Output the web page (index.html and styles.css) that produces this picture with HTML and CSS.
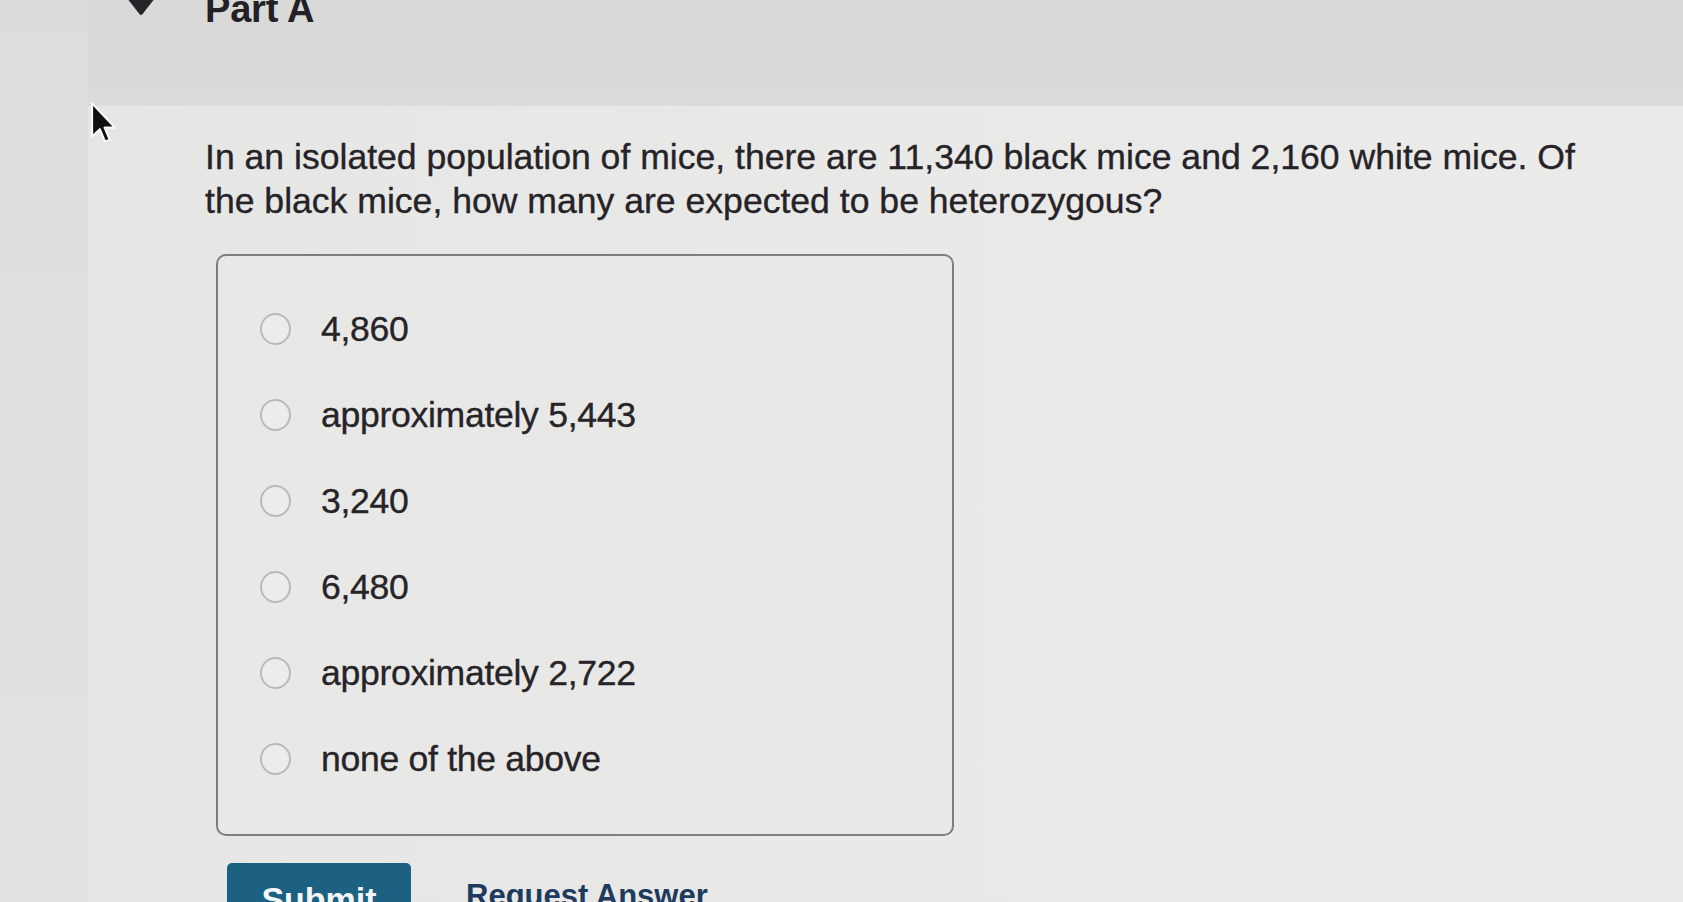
FILE: index.html
```html
<!DOCTYPE html>
<html lang="en">
<head>
<meta charset="utf-8">
<title>Part A</title>
<link rel="stylesheet" href="styles.css">
</head>
<body>
<div class="page">
  <div class="left-strip"></div>
  <div class="main">
    <header class="part-header">
      <svg class="caret" width="28" height="16" viewBox="0 0 28 16" aria-hidden="true">
        <path d="M1.5 0 L26.5 0 L15.6 14 Q14 15.8 12.4 14 Z" fill="#252328"/>
      </svg>
      <h2 class="part-title">Part A</h2>
    </header>
    <section class="question">
      <p class="prompt">In an isolated population of mice, there are 11,340 black mice and 2,160 white mice. Of the black mice, how many are expected to be heterozygous?</p>
      <div class="choices">
        <label class="choice"><span class="radio"></span><span class="choice-text">4,860</span></label>
        <label class="choice"><span class="radio"></span><span class="choice-text">approximately 5,443</span></label>
        <label class="choice"><span class="radio"></span><span class="choice-text">3,240</span></label>
        <label class="choice"><span class="radio"></span><span class="choice-text">6,480</span></label>
        <label class="choice"><span class="radio"></span><span class="choice-text">approximately 2,722</span></label>
        <label class="choice"><span class="radio"></span><span class="choice-text">none of the above</span></label>
      </div>
      <div class="actions">
        <button class="submit-btn">Submit</button>
        <a class="request-link">Request Answer</a>
      </div>
    </section>
  </div>
  <svg class="cursor" width="27" height="45" viewBox="0 0 26 43" aria-hidden="true">
    <path d="M2 2 L2 34 L9.5 27 L14.5 39 L19 37 L14 25.5 L24 25.5 Z" fill="#111" stroke="#fafafa" stroke-width="2" stroke-linejoin="round"/>
  </svg>
</div>
</body>
</html>
```

FILE: styles.css
```css
html, body {
  margin: 0;
  padding: 0;
  height: 100%;
  overflow: hidden;
}

body {
  font-family: "Liberation Sans", Arial, Helvetica, sans-serif;
  color: #27252a;
  background: #e6e6e4;
}

.page {
  position: relative;
  display: flex;
  width: 1683px;
  height: 902px;
  overflow: hidden;
}

.left-strip {
  flex: 0 0 88px;
  background: linear-gradient(180deg, #dcdcda 0%, #dfdfdd 40%, #e1e1df 100%);
}

.main {
  flex: 1;
  display: flex;
  flex-direction: column;
  background: linear-gradient(90deg, #e6e6e4 0%, #e9e9e7 50%, #ebebea 100%);
}

.part-header {
  flex: 0 0 106px;
  display: flex;
  align-items: flex-start;
  padding-left: 39px;
  background: linear-gradient(180deg, #d9d9d7 0%, #dadad8 80%, #dcdcda 100%);
  overflow: hidden;
}

.caret {
  flex: 0 0 auto;
  display: block;
}

.part-title {
  margin: -10px 0 0 50px;
  font-size: 38px;
  line-height: 38px;
  font-weight: bold;
  color: #232126;
  letter-spacing: -0.2px;
}

.question {
  padding-left: 117px;
}

.prompt {
  margin: 29px 0 0 0;
  max-width: 1395px;
  font-size: 35.6px;
  line-height: 44px;
  color: #252328;
  -webkit-text-stroke: 0.35px #252328;
}

.choices {
  box-sizing: border-box;
  width: 738px;
  height: 582px;
  margin: 31px 0 0 11px;
  padding: 30px 0 31px 42px;
  border: 2px solid #7e7e7e;
  border-radius: 10px;
  display: flex;
  flex-direction: column;
  background: #e8e8e6;
}

.choice {
  height: 86px;
  display: flex;
  align-items: center;
  gap: 30px;
}

.radio {
  flex: 0 0 auto;
  box-sizing: border-box;
  width: 31px;
  height: 32px;
  border: 2px solid #b9b9b8;
  border-radius: 50%;
  background: #ececeb;
}

.choice-text {
  font-size: 35.6px;
  line-height: 40px;
  color: #262428;
  letter-spacing: -0.3px;
  -webkit-text-stroke: 0.35px #262428;
}

.actions {
  display: flex;
  align-items: flex-start;
  gap: 55px;
  margin: 27px 0 0 22px;
}

.submit-btn {
  width: 184px;
  height: 72px;
  padding: 0;
  border: none;
  border-radius: 5px;
  background: #1c6182;
  color: #f4f6f8;
  font-family: "Liberation Sans", Arial, Helvetica, sans-serif;
  font-size: 34px;
  font-weight: bold;
  line-height: 72px;
}

.request-link {
  font-size: 31px;
  font-weight: bold;
  line-height: 66px;
  color: #1e3b5e;
}

.cursor {
  position: absolute;
  left: 90px;
  top: 101px;
}
```
